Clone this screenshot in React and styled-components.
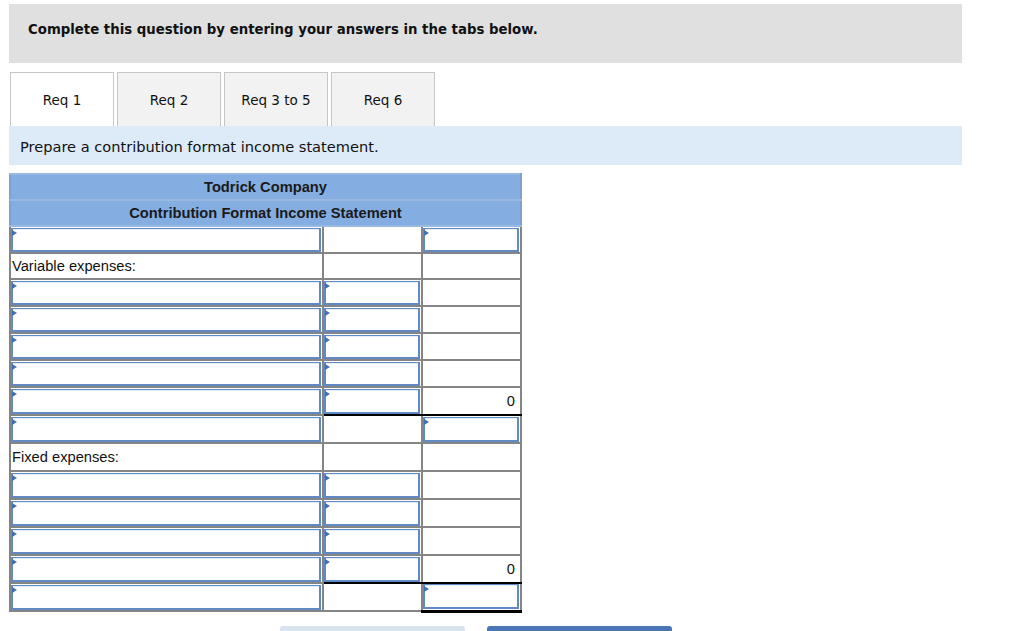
import React from 'react';
import styled, { createGlobalStyle } from 'styled-components';

const Global = createGlobalStyle`
  body {
    margin: 0;
    background: #fff;
    font-family: "DejaVu Sans", Verdana, sans-serif;
    color: #111;
  }
`;

const Page = styled.div`
  padding: 4px 0 0 9px;
  width: 953px;
`;

const Prompt = styled.div`
  box-sizing: border-box;
  height: 59px;
  background: #e0e0e0;
  padding: 18px 19px;
  font-size: 13.3px;
  font-weight: bold;
`;

const Tabs = styled.div`
  display: flex;
  gap: 3px;
  margin-top: 9px;
  padding-left: 1px;
`;

const Tab = styled.div`
  box-sizing: border-box;
  width: 104px;
  height: 54px;
  border: 1px solid #c6c6c6;
  border-bottom: none;
  background: ${p => (p.active ? '#fff' : '#f2f2f2')};
  display: flex;
  align-items: center;
  justify-content: center;
  font-size: 13.5px;
  color: #111;
`;

const Instruction = styled.div`
  height: 39px;
  line-height: 42px;
  background: #ddeaf8;
  padding-left: 11px;
  font-size: 14.6px;
  color: #111;
`;

const Sheet = styled.table`
  margin-top: 8px;
  border-collapse: collapse;
  width: 511px;
  table-layout: fixed;
  font-family: "Liberation Sans", Arial, sans-serif;
  font-size: 14.7px;
`;

const Head = styled.td`
  background: #84ade1;
  border: 2px solid #8a8a8a;
  border-color: #9ab8e0 #7f9fcf;
  height: 24px;
  text-align: center;
  font-weight: bold;
  color: #1a1a1a;
  padding: 0;
`;

const Cell = styled.td`
  border: 2px solid #858585;
  border-top-color: ${p => (p.ruleTop ? '#000' : '#858585')};
  border-bottom: ${p => (p.double ? '3px solid #000' : p.rule ? '2px solid #000' : '2px solid #858585')};
  height: ${p => p.h}px;
  padding: 0;
  text-align: ${p => (p.num ? 'right' : 'left')};
  vertical-align: middle;
  color: #111;
  box-sizing: border-box;
`;

const Label = styled.span`
  padding-left: 1px;
`;

const Num = styled.span`
  padding-right: 5px;
`;

const Field = styled.div`
  position: relative;
  box-sizing: border-box;
  height: ${p => p.h - 3}px;
  margin: 0 1px 0 0;
  border: 2px solid #6189c4;
  border-top-width: 1px;
  background: #fff;
  box-shadow: inset 0 1px 0 #e8eef8;
  &::before {
    content: '';
    position: absolute;
    top: 1px;
    left: -1px;
    border-top: 3px solid transparent;
    border-bottom: 3px solid transparent;
    border-left: 5px solid #3f70b8;
  }
`;

const Buttons = styled.div`
  display: flex;
  gap: 22px;
  margin: 13px 0 0 271px;
`;

const Btn = styled.div`
  width: 185px;
  height: 20px;
  border-radius: 3px 3px 0 0;
  background: ${p => (p.primary ? '#4a76b6' : '#dae4f0')};
`;

// c: 'in' input field, '0' value, text label, null empty
// rule: black line under the amount columns; total: row sitting on that line
const rows = [
  { h: 27, c: ['in', null, 'in'] },
  { h: 26, c: ['Variable expenses:', null, null] },
  { h: 27, c: ['in', 'in', null] },
  { h: 27, c: ['in', 'in', null] },
  { h: 27, c: ['in', 'in', null] },
  { h: 27, c: ['in', 'in', null] },
  { h: 28, c: ['in', 'in', '0'], rule: true },
  { h: 28, c: ['in', null, 'in'], total: true },
  { h: 28, c: ['Fixed expenses:', null, null] },
  { h: 28, c: ['in', 'in', null] },
  { h: 28, c: ['in', 'in', null] },
  { h: 28, c: ['in', 'in', null] },
  { h: 28, c: ['in', 'in', '0'], rule: true },
  { h: 28, c: ['in', null, 'in'], total: true, last: true },
];

const Row = ({ r }) => (
  <tr>
    {r.c.map((v, i) => (
      <Cell
        key={i}
        h={r.h}
        num={v === '0'}
        rule={r.rule && i > 0}
        ruleTop={r.total && i > 0}
        double={r.last && i === 2}
      >
        {v === 'in' ? <Field h={r.h} /> : v === '0' ? <Num>0</Num> : v ? <Label>{v}</Label> : null}
      </Cell>
    ))}
  </tr>
);

export default function App() {
  return (
    <Page>
      <Global />
      <Prompt>Complete this question by entering your answers in the tabs below.</Prompt>
      <Tabs>
        <Tab active>Req 1</Tab>
        <Tab>Req 2</Tab>
        <Tab>Req 3 to 5</Tab>
        <Tab>Req 6</Tab>
      </Tabs>
      <Instruction>Prepare a contribution format income statement.</Instruction>
      <Sheet>
        <colgroup>
          <col style={{ width: 313 }} />
          <col style={{ width: 99 }} />
          <col style={{ width: 99 }} />
        </colgroup>
        <tbody>
          <tr><Head colSpan={3}>Todrick Company</Head></tr>
          <tr><Head colSpan={3}>Contribution Format Income Statement</Head></tr>
          {rows.map((r, i) => <Row key={i} r={r} />)}
        </tbody>
      </Sheet>
      <Buttons>
        <Btn />
        <Btn primary />
      </Buttons>
    </Page>
  );
}
